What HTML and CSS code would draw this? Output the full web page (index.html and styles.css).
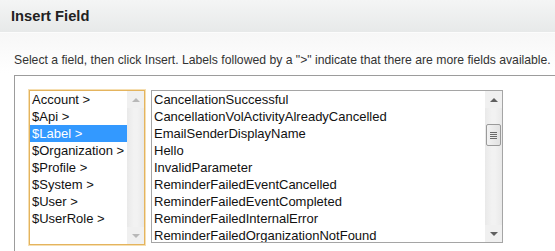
FILE: index.html
```html
<!DOCTYPE html>
<html>
<head>
<meta charset="utf-8">
<link rel="stylesheet" href="styles.css">
</head>
<body>
<div class="header"><h1 class="title">Insert Field</h1></div>
<div class="content">
  <p class="hint">Select a field, then click Insert. Labels followed by a "&gt;" indicate that there are more fields available.</p>
  <div class="panel">
    <div class="list list-focus">
      <div class="items items-left">
        <div class="item">Account &gt;</div>
        <div class="item">$Api &gt;</div>
        <div class="item selected">$Label &gt;</div>
        <div class="item">$Organization &gt;</div>
        <div class="item">$Profile &gt;</div>
        <div class="item">$System &gt;</div>
        <div class="item">$User &gt;</div>
        <div class="item">$UserRole &gt;</div>
      </div>
      <div class="scrollbar">
        <div class="arrow arrow-up disabled"></div>
        <div class="track"></div>
        <div class="arrow arrow-down disabled"></div>
      </div>
    </div>
    <div class="list list-right">
      <div class="items items-right">
        <div class="item">CancellationSuccessful</div>
        <div class="item">CancellationVolActivityAlreadyCancelled</div>
        <div class="item">EmailSenderDisplayName</div>
        <div class="item">Hello</div>
        <div class="item">InvalidParameter</div>
        <div class="item">ReminderFailedEventCancelled</div>
        <div class="item">ReminderFailedEventCompleted</div>
        <div class="item">ReminderFailedInternalError</div>
        <div class="item">ReminderFailedOrganizationNotFound</div>
      </div>
      <div class="scrollbar">
        <div class="arrow arrow-up"></div>
        <div class="track">
          <div class="thumb"><span class="grip"></span><span class="grip"></span><span class="grip"></span><span class="grip"></span></div>
        </div>
        <div class="arrow arrow-down"></div>
      </div>
    </div>
  </div>
</div>
</body>
</html>
```
FILE: styles.css
```css
html, body {
  margin: 0;
  padding: 0;
  background: #fff;
  font-family: "Liberation Sans", Arial, sans-serif;
  color: #222;
  overflow: hidden;
}
.header {
  height: 32px;
  background: linear-gradient(#f4f5f5, #e7e9e9);
  border-bottom: 1px solid #fcfcfc;
  display: flex;
  align-items: center;
  padding-left: 11px;
}
.title {
  margin: 0;
  font-size: 14.7px;
  font-weight: bold;
  color: #222;
}
.content {
  background: linear-gradient(#f7f7f7, #ffffff 40px);
  padding: 20px 0 0 14px;
}
.hint {
  margin: 0;
  font-size: 12.2px;
  color: #333;
  white-space: nowrap;
  line-height: 14px;
}
.panel {
  margin-top: 8px;
  border-left: 1px solid #9c9c9c;
  border-top: 1px solid #9c9c9c;
  height: 165px;
  display: flex;
  align-items: flex-start;
  padding: 14px 0 0 14px;
  gap: 5px;
}
.list {
  display: flex;
  background: #fff;
  font-size: 13px;
  color: #111;
}
.list-focus {
  width: 114px;
  height: 153px;
  border: 1px solid #e4b45e;
  box-shadow: 0 0 0 1px #f6dfb2;
}
.list-right {
  width: 350px;
  height: 151px;
  border: 1px solid #a5a5a5;
  margin-left: 1px;
}
.items {
  flex: 1;
  overflow: hidden;
}
.item {
  height: 17px;
  line-height: 17px;
  padding-left: 2px;
  white-space: nowrap;
}
.selected {
  background: #3399ff;
  color: #fff;
}
.scrollbar {
  width: 17px;
  display: flex;
  flex-direction: column;
  background: #f0f0f0;
}
.track {
  flex: 1;
  position: relative;
  background: linear-gradient(90deg, #e9e9e9, #f2f2f2 40%, #f2f2f2 60%, #e9e9e9);
}
.arrow {
  height: 17px;
  display: flex;
  align-items: center;
  justify-content: center;
  background: #f0f0f0;
}
.arrow::before {
  content: "";
  width: 0;
  height: 0;
  border-left: 4px solid transparent;
  border-right: 4px solid transparent;
}
.arrow-up::before {
  border-bottom: 4px solid #606060;
}
.arrow-down::before {
  border-top: 4px solid #606060;
}
.arrow.disabled::before {
  border-bottom-color: #b8b8b8;
  border-top-color: #b8b8b8;
}
.arrow-up.disabled::before {
  border-top: 0;
}
.arrow-down.disabled::before {
  border-bottom: 0;
}
.thumb {
  position: absolute;
  left: 1px;
  right: 1px;
  top: 16px;
  height: 22px;
  border: 1px solid #9a9a9a;
  border-radius: 2px;
  background: linear-gradient(90deg, #f2f2f2, #e2e2e2);
  box-sizing: border-box;
  display: flex;
  flex-direction: column;
  align-items: center;
  justify-content: center;
  gap: 1px;
}
.grip {
  display: block;
  width: 7px;
  height: 1px;
  background: #6a6a6a;
}
```
